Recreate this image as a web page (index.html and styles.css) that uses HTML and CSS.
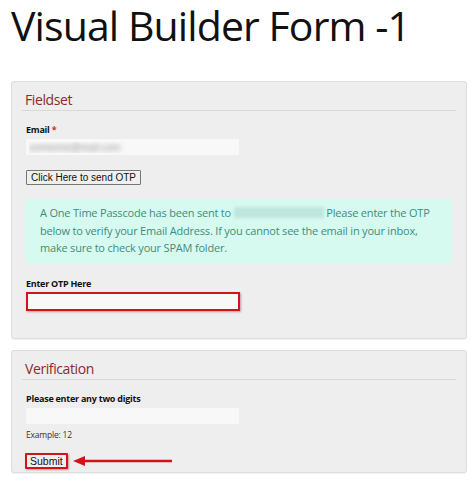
FILE: index.html
```html
<!DOCTYPE html>
<html lang="en">
<head>
  <meta charset="UTF-8">
  <meta name="viewport" content="width=device-width, initial-scale=1.0">
  <title>Visual Builder Form -1</title>
  <link rel="stylesheet" href="styles.css">
</head>
<body>

<h1 class="page-title">Visual Builder Form -1</h1>

<form class="form" onsubmit="return false">
  <!-- Bagian pertama: email + OTP -->
  <fieldset class="panel">
    <legend class="panel-title">Fieldset</legend>

    <div class="field">
      <label class="label" for="email">Email <span class="req">*</span></label>
      <input id="email" class="input blurred" type="text" value="someone@mail.com" readonly>
    </div>

    <div class="field">
      <button type="button" class="btn">Click Here to send OTP</button>
    </div>

    <div class="notice">
      A One Time Passcode has been sent to <span class="hidden-mail"></span> Please enter the OTP
      below to verify your Email Address. If you cannot see the email in your inbox,
      make sure to check your SPAM folder.
    </div>

    <div class="field otp">
      <label class="label" for="otp">Enter OTP Here</label>
      <input id="otp" class="input marked" type="text">
    </div>
  </fieldset>

  <!-- Bagian kedua: verifikasi -->
  <fieldset class="panel">
    <legend class="panel-title">Verification</legend>

    <div class="field">
      <label class="label" for="digits">Please enter any two digits</label>
      <input id="digits" class="input" type="text">
      <div class="hint">Example: 12</div>
    </div>

    <div class="field submit-row">
      <button type="submit" class="btn marked">Submit</button>
      <svg class="arrow" width="100" height="12" viewBox="0 0 100 12">
        <path d="M10 6 H99" stroke="#d3131b" stroke-width="2.4" fill="none"/>
        <path d="M0 6 L12 1 L12 11 Z" fill="#d3131b"/>
      </svg>
    </div>
  </fieldset>
</form>

</body>
</html>
```

FILE: styles.css
```css
* {
  box-sizing: border-box;
}
body {
  margin: 0;
  background-color: #fff;
  font-family: "Open Sans", sans-serif;
  color: #222;
}
.page-title {
  margin: 0;
  padding: 0 0 0 11px;
  height: 73px;
  font-size: 41px;
  font-weight: 400;
  line-height: 50px;
  letter-spacing: -0.9px;
  color: #111;
}
.form {
  margin: 8px 7px 0 11px;
}
.panel {
  display: block;
  margin: 0 0 11px;
  padding: 8px 10px 27px;
  min-width: 0;
  background-color: #eee;
  border: 1px solid #dedede;
  border-radius: 3px;
  box-shadow: 0 1px 1px rgba(0, 0, 0, 0.06);
}
.panel:last-child {
  padding-bottom: 3px;
}
.panel-title {
  float: left;
  width: 100%;
  padding: 0 0 0 3px;
  margin-bottom: 3px;
  font-size: 14px;
  line-height: 20px;
  letter-spacing: -0.4px;
  color: #8c2a2a;
  border-bottom: 1px solid #d8d8d8;
}
.field {
  clear: both;
  padding: 9px 4px 0;
}
.label {
  display: block;
  font-size: 9px;
  font-weight: 700;
  line-height: 13px;
  color: #111;
  letter-spacing: -0.25px;
}
.req {
  color: #d0302a;
}
.input {
  display: block;
  margin-top: 3px;
  width: 213px;
  height: 16px;
  padding: 0 3px;
  border: none;
  background-color: #f8f8f8;
  font-family: "Liberation Sans", Arial, sans-serif;
  font-size: 10px;
  outline: none;
}
.input.blurred {
  color: transparent;
  text-shadow: 0 0 5px rgba(90, 90, 90, 0.6);
}
.input.marked {
  margin-top: 2px;
  width: 214px;
  height: 19px;
  border: 2px solid #d3131b;
  box-shadow: 1px 1px 2px rgba(120, 0, 0, 0.35);
}
.btn {
  margin-top: 6px;
  padding: 0 4px;
  height: 15px;
  font-family: "Liberation Sans", Arial, sans-serif;
  font-size: 10px;
  line-height: 13px;
  color: #111;
  background-color: #efefef;
  border: 1px solid #767676;
  border-radius: 1px;
}
.btn.marked {
  margin-top: 0;
  height: 16px;
  padding: 0 3px;
  font-size: 10.5px;
  border: 2px solid #d3131b;
  box-shadow: 1px 1px 2px rgba(120, 0, 0, 0.35);
}
.notice {
  margin: 13px 4px 0 3px;
  padding: 5px 10px 7px 15px;
  font-size: 11px;
  line-height: 17.5px;
  letter-spacing: -0.2px;
  color: #3f8c7c;
  background-color: #d6faf0;
}
.hidden-mail {
  display: inline-block;
  width: 90px;
  height: 11px;
  vertical-align: -1px;
  background-color: #bfe6dc;
  filter: blur(1.5px);
}
.field.otp {
  padding-top: 13px;
}
.hint {
  margin-top: 5px;
  font-size: 8.5px;
  line-height: 12px;
  color: #333;
  letter-spacing: -0.2px;
}
.submit-row {
  display: flex;
  align-items: center;
  gap: 5px;
  padding-top: 12px;
  padding-left: 3px;
}
.arrow {
  display: block;
}
```
